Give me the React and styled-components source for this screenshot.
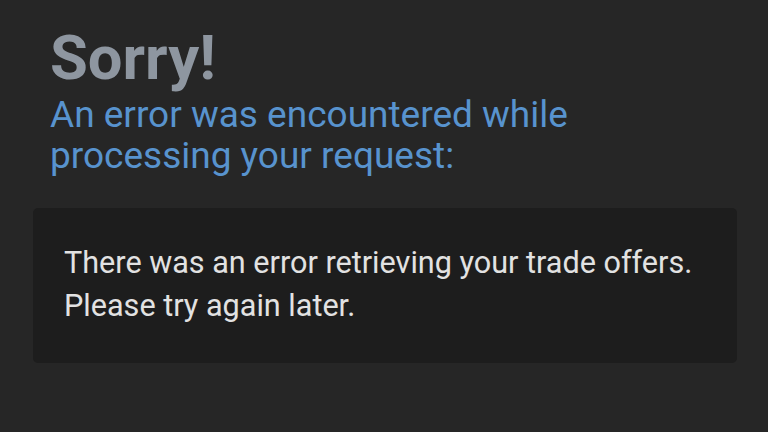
import React from 'react';
import styled, { createGlobalStyle } from 'styled-components';

const GlobalStyle = createGlobalStyle`
  html, body {
    margin: 0;
    padding: 0;
    background: #262626;
    font-family: Roboto, "Liberation Sans", sans-serif;
  }
`;

const Page = styled.div`
  width: 768px;
  height: 432px;
  box-sizing: border-box;
  padding: 23px 31px 0 33px;
  background: #262626;
`;

const Header = styled.div`
  padding-left: 17px;
`;

const Title = styled.h1`
  margin: 0;
  font-size: 61.5px;
  line-height: 71px;
  font-weight: 700;
  color: #8e96a0;
`;

const Subtitle = styled.h2`
  margin: 0;
  font-size: 37px;
  line-height: 41px;
  font-weight: 400;
  color: #5893ce;
`;

const Panel = styled.div`
  margin-top: 32px;
  background: #1d1d1d;
  border-radius: 5px;
  padding: 33px 31px 36px;
`;

const Message = styled.p`
  margin: 0;
  font-size: 30.6px;
  line-height: 43px;
  color: #e2e2e2;
`;

export default function App() {
  return (
    <>
      <GlobalStyle />
      <Page>
        <Header>
          <Title>Sorry!</Title>
          <Subtitle>
            An error was encountered while
            <br />
            processing your request:
          </Subtitle>
        </Header>
        <Panel>
          <Message>
            There was an error retrieving your trade offers.
            <br />
            Please try again later.
          </Message>
        </Panel>
      </Page>
    </>
  );
}
